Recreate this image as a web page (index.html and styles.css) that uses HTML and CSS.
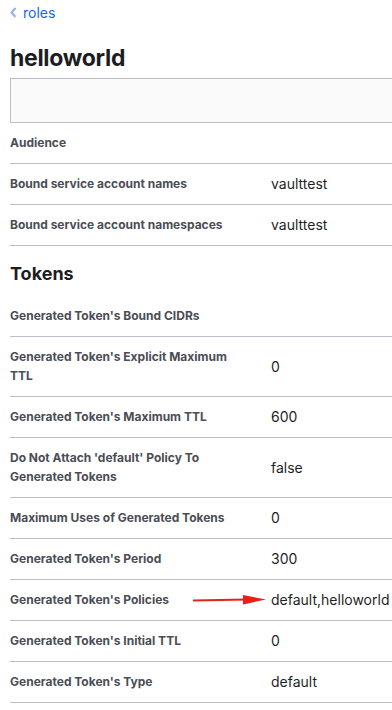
FILE: index.html
```html
<!DOCTYPE html>
<html>
<head>
<meta charset="utf-8">
<link rel="stylesheet" href="styles.css">
</head>
<body>
<div class="page">
  <a class="back" href="#"><svg class="chev" width="7" height="11" viewBox="0 0 7 11"><path d="M5.5 1 L1.5 5.5 L5.5 10" fill="none" stroke="#8fb0f5" stroke-width="2"/></svg><span>roles</span></a>
  <h1 class="title">helloworld</h1>
  <div class="toolbar"></div>
  <div class="list">
    <div class="row"><div class="label">Audience</div><div class="value"></div></div>
    <div class="row"><div class="label">Bound service account names</div><div class="value">vaulttest</div></div>
    <div class="row"><div class="label">Bound service account namespaces</div><div class="value">vaulttest</div></div>
  </div>
  <h2 class="section">Tokens</h2>
  <div class="list">
    <div class="row"><div class="label">Generated Token's Bound CIDRs</div><div class="value"></div></div>
    <div class="row"><div class="label">Generated Token's Explicit Maximum TTL</div><div class="value">0</div></div>
    <div class="row"><div class="label">Generated Token's Maximum TTL</div><div class="value">600</div></div>
    <div class="row"><div class="label">Do Not Attach 'default' Policy To Generated Tokens</div><div class="value">false</div></div>
    <div class="row"><div class="label">Maximum Uses of Generated Tokens</div><div class="value">0</div></div>
    <div class="row"><div class="label">Generated Token's Period</div><div class="value">300</div></div>
    <div class="row arrow-row"><div class="label">Generated Token's Policies</div><div class="value">default,helloworld</div>
      <svg class="arrow" width="74" height="12" viewBox="0 0 74 12"><path d="M0 6.5 L54 5.5" stroke="#e8201c" stroke-width="2"/><path d="M50 1 L73 5.5 L50 10.5 Z" fill="#e8201c"/></svg>
    </div>
    <div class="row"><div class="label">Generated Token's Initial TTL</div><div class="value">0</div></div>
    <div class="row"><div class="label">Generated Token's Type</div><div class="value">default</div></div>
  </div>
</div>
</body>
</html>
```
FILE: styles.css
```css
html, body {
  margin: 0;
  padding: 0;
  background: #fff;
  overflow: hidden;
}
body {
  font-family: Inter, "Liberation Sans", sans-serif;
  color: #1f1f1f;
}
.page {
  padding-left: 10px;
  width: 440px;
}
.back {
  display: flex;
  align-items: center;
  gap: 6px;
  height: 24px;
  color: #1563ff;
  text-decoration: none;
  font-size: 14px;
}
.chev { display: block; }
.title {
  margin: 20px 0 0;
  font-size: 23px;
  line-height: 28px;
  font-weight: 700;
  color: #1d1d1f;
  letter-spacing: -0.3px;
}
.toolbar {
  margin-top: 6px;
  height: 43px;
  background: #fafafa;
  border: 1px solid #b6bdc9;
  border-right: none;
}
.list {
  display: flex;
  flex-direction: column;
}
.row {
  display: grid;
  grid-template-columns: 240px 1fr;
  column-gap: 21px;
  align-items: center;
  padding: 10px 0 11px;
  border-bottom: 1px solid #bac0ca;
  position: relative;
}
.label {
  font-size: 12px;
  line-height: 19px;
  font-weight: 700;
  color: #4a4d55;
}
.value {
  font-size: 14px;
  line-height: 19px;
  color: #1f1f1f;
}
.section {
  margin: 0;
  padding: 18px 0 12px;
  font-size: 18px;
  line-height: 20px;
  font-weight: 700;
  color: #1d1d1f;
}
.arrow {
  position: absolute;
  left: 183px;
  top: 14px;
}
```
